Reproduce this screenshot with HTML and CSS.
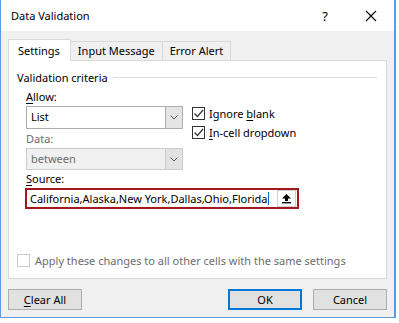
FILE: index.html
```html
<!DOCTYPE html>
<html lang="en">
<head>
  <meta charset="UTF-8" />
  <title>Data Validation</title>
  <link rel="stylesheet" href="styles.css">
</head>
<body>
  <div class="window">
    <div class="titlebar">
      <span class="title">Data Validation</span>
      <span class="help">?</span>
      <span class="close">
        <svg width="12" height="12" viewBox="0 0 12 12"><path d="M1 1 L11 11 M11 1 L1 11" stroke="#000" stroke-width="1.1"/></svg>
      </span>
    </div>

    <div class="content">
      <div class="tabs">
        <div class="tab active">Settings</div>
        <div class="tab">Input Message</div>
        <div class="tab">Error Alert</div>
      </div>

      <div class="panel">
        <div class="group-title">
          <span>Validation criteria</span>
          <span class="rule"></span>
        </div>

        <div class="criteria">
          <div class="fields">
            <div class="label"><u>A</u>llow:</div>
            <div class="combo">
              <span class="value">List</span>
              <span class="drop"><svg width="8" height="5" viewBox="0 0 8 5"><path d="M0.5 0.5 L4 4 L7.5 0.5" fill="none" stroke="#555" stroke-width="1"/></svg></span>
            </div>
            <div class="label disabled">Data:</div>
            <div class="combo disabled">
              <span class="value">between</span>
              <span class="drop"><svg width="8" height="5" viewBox="0 0 8 5"><path d="M0.5 0.5 L4 4 L7.5 0.5" fill="none" stroke="#555" stroke-width="1"/></svg></span>
            </div>
          </div>

          <div class="options">
            <label class="check">
              <span class="box"><svg width="11" height="11" viewBox="0 0 11 11"><path d="M1.5 5.5 L4.5 8.5 L10 2" fill="none" stroke="#333" stroke-width="1.2"/></svg></span>
              <span>Ignore <u>b</u>lank</span>
            </label>
            <label class="check">
              <span class="box"><svg width="11" height="11" viewBox="0 0 11 11"><path d="M1.5 5.5 L4.5 8.5 L10 2" fill="none" stroke="#333" stroke-width="1.2"/></svg></span>
              <span><u>I</u>n-cell dropdown</span>
            </label>
          </div>
        </div>

        <div class="label source-label"><u>S</u>ource:</div>
        <div class="source">
          <span class="source-text">California,Alaska,New York,Dallas,Ohio,Florida<span class="caret"></span></span>
          <span class="collapse">
            <svg width="11" height="11" viewBox="0 0 11 11"><path d="M5.5 1 L10 5.5 L7 5.5 L7 8 L4 8 L4 5.5 L1 5.5 Z" fill="#000"/><rect x="1" y="9" width="9" height="1.4" fill="#000"/></svg>
          </span>
        </div>

        <label class="check apply">
          <span class="box"></span>
          <span>Apply these changes to all other cells with the same settings</span>
        </label>
      </div>

      <div class="buttons">
        <button class="btn"><u>C</u>lear All</button>
        <div class="spacer"></div>
        <button class="btn default">OK</button>
        <button class="btn">Cancel</button>
      </div>
    </div>
  </div>
</body>
</html>
```

FILE: styles.css
```css
body {
  margin: 0;
  background: #fff;
  font-family: "Noto Sans", "Segoe UI", sans-serif;
  font-size: 11px;
  color: #000;
}
u {
  text-decoration: underline;
  text-underline-offset: 2px;
}
.window {
  width: 393px;
  height: 317px;
  border: 1px solid #5a9ae0;
  border-top: none;
  border-right-width: 2px;
  display: flex;
  flex-direction: column;
}
.titlebar {
  height: 31px;
  background: #fff;
  display: flex;
  align-items: center;
  padding-left: 10px;
  font-size: 11px;
}
.title {
  flex: 1;
}
.help {
  width: 46px;
  text-align: center;
  font-size: 13px;
}
.close {
  width: 46px;
  display: flex;
  justify-content: center;
}
.content {
  flex: 1;
  background: #f0f0f0;
  padding: 8px 7px 0 7px;
  display: flex;
  flex-direction: column;
}
.tabs {
  display: flex;
  align-items: flex-end;
  height: 21px;
  position: relative;
  z-index: 1;
}
.tab {
  height: 18px;
  line-height: 18px;
  padding: 0 7px 0 7px;
  border: 1px solid #d9d9d9;
  border-bottom: none;
  border-left: none;
  background: #f0f0f0;
}
.tab.active {
  height: 21px;
  line-height: 22px;
  background: #fff;
  border-left: 1px solid #d9d9d9;
  padding: 0 10px 0 9px;
  margin-bottom: -1px;
}
.panel {
  width: 379px;
  height: 219px;
  background: #fff;
  border: 1px solid #d9d9d9;
  padding: 0 8px;
  box-sizing: border-box;
}
.group-title {
  display: flex;
  align-items: center;
  height: 16px;
  margin-top: 8px;
}
.rule {
  flex: 1;
  height: 1px;
  background: #dcdcdc;
  margin-left: 5px;
  margin-right: 1px;
}
.criteria {
  display: flex;
  padding-left: 9px;
  margin-top: 4px;
}
.fields {
  width: 157px;
}
.label {
  height: 16px;
  line-height: 16px;
}
.label.disabled {
  color: #6d6d6d;
}
.combo {
  display: flex;
  height: 23px;
  border: 1px solid #adadad;
  box-sizing: border-box;
  margin: 1px 0 2px 0;
  background: #fff;
}
.combo .value {
  flex: 1;
  line-height: 20px;
  padding-left: 4px;
}
.combo .drop {
  width: 16px;
  background: #e5e5e5;
  border-left: 1px solid #adadad;
  display: flex;
  align-items: center;
  justify-content: center;
}
.combo.disabled {
  height: 22px;
  background: #f0f0f0;
  border-color: #cccccc;
  color: #6d6d6d;
}
.combo.disabled .drop {
  background: #e2e2e2;
  border-left-color: #cccccc;
}
.options {
  margin-left: 9px;
  padding-top: 18px;
  display: flex;
  flex-direction: column;
  gap: 6px;
}
.check {
  display: flex;
  align-items: center;
  gap: 4px;
  height: 13px;
}
.box {
  width: 11px;
  height: 11px;
  border: 1px solid #333;
  background: #fff;
  display: flex;
}
.source-label {
  margin-left: 9px;
  height: 14px;
  line-height: 14px;
}
.source {
  margin-left: 8px;
  margin-top: 2px;
  width: 274px;
  height: 21px;
  box-sizing: border-box;
  border: 2px solid #a3161c;
  display: flex;
  align-items: center;
}
.source-text {
  flex: 1;
  padding-left: 3px;
  white-space: nowrap;
  overflow: hidden;
  display: flex;
  align-items: center;
}
.caret {
  display: inline-block;
  width: 1px;
  height: 13px;
  background: #1a5fd0;
  margin-left: 1px;
}
.collapse {
  width: 17px;
  height: 15px;
  background: #fff;
  border: 1px solid #cfcfcf;
  margin-right: 1px;
  display: flex;
  align-items: center;
  justify-content: center;
}
.apply {
  margin-top: 45px;
  color: #6d6d6d;
  gap: 5px;
}
.apply .box {
  border-color: #cccccc;
}
.buttons {
  display: flex;
  margin-top: 10px;
  gap: 11px;
}
.spacer {
  flex: 1;
}
.btn {
  width: 74px;
  height: 21px;
  font-family: inherit;
  font-size: 11px;
  background: #e1e1e1;
  border: 1px solid #adadad;
  padding: 0;
  color: #000;
}
.btn.default {
  border: 2px solid #0078d7;
}
```
